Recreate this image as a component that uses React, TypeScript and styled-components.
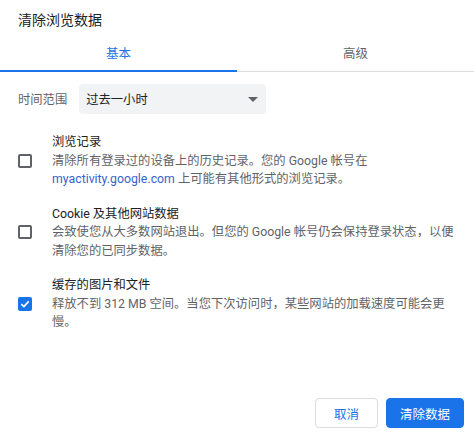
import { createGlobalStyle, styled } from "styled-components";

const GlobalStyle = createGlobalStyle`
    html, body {
        margin: 0;
        padding: 0;
        background: #ffffff;
    }
    body {
        font-family: Roboto, "Noto Sans CJK SC", sans-serif;
        color: #202124;
    }
`;

const Dialog = styled.div`
    display: flex;
    flex-direction: column;
    width: 474px;
    height: 437px;
    background: #ffffff;
    box-sizing: border-box;
`;

const Title = styled.h2`
    margin: 0;
    padding: 10px 18px 0;
    font-size: 14px;
    font-weight: 400;
    line-height: 20px;
    color: #202124;
`;

const TabList = styled.div`
    display: flex;
    margin-top: 4px;
    box-shadow: inset 0 -1px 0 #dadce0;
`;

const Tab = styled.button<{ $active?: boolean }>`
    flex: 1;
    height: 38px;
    padding: 0;
    border: none;
    border-bottom: 2px solid ${(p) => (p.$active ? "#1a73e8" : "transparent")};
    background: transparent;
    font-family: inherit;
    font-size: 12.5px;
    color: ${(p) => (p.$active ? "#1a73e8" : "#5f6368")};
    cursor: pointer;
`;

const RangeRow = styled.div`
    display: flex;
    align-items: center;
    gap: 12px;
    margin-top: 12px;
    padding: 0 18px;
`;

const Label = styled.span`
    font-size: 12.3px;
    color: #5f6368;
`;

const Select = styled.div`
    display: flex;
    align-items: center;
    justify-content: space-between;
    width: 187px;
    height: 30px;
    padding: 0 8px 0 7px;
    box-sizing: border-box;
    border-radius: 4px;
    background: #f1f3f4;
    font-size: 12.3px;
    color: #202124;
`;

const Arrow = styled.span`
    width: 0;
    height: 0;
    border-left: 5px solid transparent;
    border-right: 5px solid transparent;
    border-top: 5px solid #5f6368;
`;

const Options = styled.div`
    display: flex;
    flex-direction: column;
    gap: 16px;
    margin-top: 19px;
    padding: 0 10px 0 18px;
`;

const Option = styled.label`
    display: flex;
    align-items: center;
    gap: 20px;
`;

const Box = styled.span<{ $checked?: boolean }>`
    flex: none;
    display: flex;
    align-items: center;
    justify-content: center;
    width: 14px;
    height: 14px;
    box-sizing: border-box;
    border-radius: 2px;
    border: 2px solid ${(p) => (p.$checked ? "#1a73e8" : "#5f6368")};
    background: ${(p) => (p.$checked ? "#1a73e8" : "transparent")};
`;

const OptionText = styled.div`
    font-size: 12.3px;
    line-height: 18.5px;
    white-space: nowrap;
`;

const OptionTitle = styled.div`
    color: #202124;
`;

const OptionDesc = styled.div`
    color: #5f6368;
`;

const Link = styled.a`
    color: #3a62cc;
    text-decoration: none;
`;

const Footer = styled.div`
    display: flex;
    justify-content: flex-end;
    gap: 8px;
    margin-top: auto;
    padding: 0 10px 9px;
`;

const Button = styled.button<{ $primary?: boolean }>`
    height: 30px;
    padding: 0 ${(p) => (p.$primary ? "13px" : "18px")};
    border-radius: 4px;
    border: 1px solid ${(p) => (p.$primary ? "#1a73e8" : "#dadce0")};
    background: ${(p) => (p.$primary ? "#1a73e8" : "#ffffff")};
    color: ${(p) => (p.$primary ? "#ffffff" : "#1a73e8")};
    font-family: inherit;
    font-size: 12.5px;
    cursor: pointer;
`;

function Check({ checked }: { checked?: boolean }) {
    return (
        <Box $checked={checked}>
            {checked && (
                <svg width="10" height="10" viewBox="0 0 10 10">
                    <path d="M1.3 5.2 L3.9 7.6 L8.7 2.4" fill="none" stroke="#ffffff" strokeWidth="1.7" />
                </svg>
            )}
        </Box>
    );
}

export default function App() {
    return (
        <>
            <GlobalStyle />
            <Dialog>
                <Title>清除浏览数据</Title>
                <TabList>
                    <Tab $active>基本</Tab>
                    <Tab>高级</Tab>
                </TabList>
                <RangeRow>
                    <Label>时间范围</Label>
                    <Select>
                        过去一小时
                        <Arrow />
                    </Select>
                </RangeRow>
                <Options>
                    <Option>
                        <Check />
                        <OptionText>
                            <OptionTitle>浏览记录</OptionTitle>
                            <OptionDesc>
                                清除所有登录过的设备上的历史记录。您的 Google 帐号在
                                <br />
                                <Link href="#">myactivity.google.com</Link> 上可能有其他形式的浏览记录。
                            </OptionDesc>
                        </OptionText>
                    </Option>
                    <Option>
                        <Check />
                        <OptionText>
                            <OptionTitle>Cookie 及其他网站数据</OptionTitle>
                            <OptionDesc>
                                会致使您从大多数网站退出。但您的 Google 帐号仍会保持登录状态，以便
                                <br />
                                清除您的已同步数据。
                            </OptionDesc>
                        </OptionText>
                    </Option>
                    <Option>
                        <Check checked />
                        <OptionText>
                            <OptionTitle>缓存的图片和文件</OptionTitle>
                            <OptionDesc>
                                释放不到 312 MB 空间。当您下次访问时，某些网站的加载速度可能会更
                                <br />
                                慢。
                            </OptionDesc>
                        </OptionText>
                    </Option>
                </Options>
                <Footer>
                    <Button>取消</Button>
                    <Button $primary>清除数据</Button>
                </Footer>
            </Dialog>
        </>
    );
}
